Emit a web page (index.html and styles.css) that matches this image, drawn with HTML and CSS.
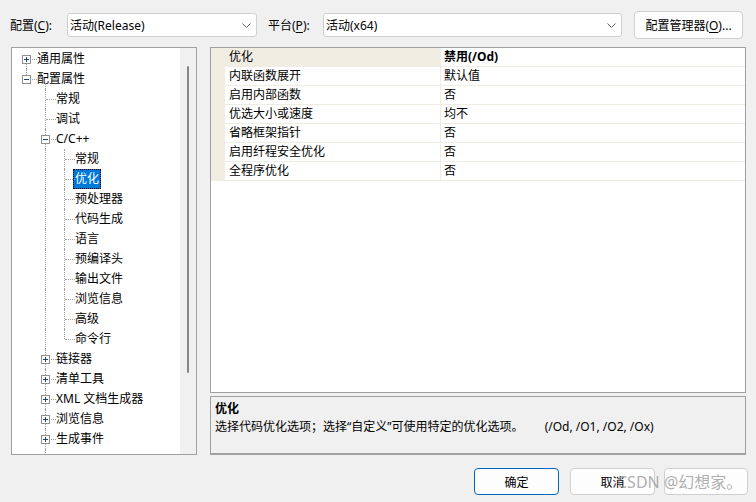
FILE: index.html
```html
<!DOCTYPE html>
<html lang="zh-CN">
<head>
    <meta charset="UTF-8">
    <title>属性页</title>
    <link rel="stylesheet" href="styles.css">
</head>
<body>
    <div class="top">
        <label class="lbl1">配置(<u>C</u>):</label>
        <div class="combo c1"><span>活动(Release)</span><svg width="9" height="5" viewBox="0 0 9 5"><polyline points="0.5,0.5 4.5,4.5 8.5,0.5" fill="none" stroke="#5f5f5f"/></svg></div>
        <label class="lbl2">平台(<u>P</u>):</label>
        <div class="combo c2"><span>活动(x64)</span><svg width="9" height="5" viewBox="0 0 9 5"><polyline points="0.5,0.5 4.5,4.5 8.5,0.5" fill="none" stroke="#5f5f5f"/></svg></div>
        <button class="btn mgr">配置管理器(<u>O</u>)...</button>
    </div>

    <div class="main">
        <div class="tree-box">
            <div class="tree">
                <div class="row"><i class="c v bot h"><b class="box plus"></b></i><span class="t">通用属性</span></div>
                <div class="row"><i class="c v top h"><b class="box"></b></i><i class="c v start"></i><span class="t lead">配置属性</span></div>
                <div class="row"><i class="c"></i><i class="c v h"></i><span class="t">常规</span></div>
                <div class="row"><i class="c"></i><i class="c v h"></i><span class="t">调试</span></div>
                <div class="row"><i class="c"></i><i class="c v h"><b class="box"></b></i><span class="t">C/C++</span></div>
                <div class="row"><i class="c"></i><i class="c v"></i><i class="c v h"></i><span class="t">常规</span></div>
                <div class="row"><i class="c"></i><i class="c v"></i><i class="c v h"></i><span class="t sel">优化</span></div>
                <div class="row"><i class="c"></i><i class="c v"></i><i class="c v h"></i><span class="t">预处理器</span></div>
                <div class="row"><i class="c"></i><i class="c v"></i><i class="c v h"></i><span class="t">代码生成</span></div>
                <div class="row"><i class="c"></i><i class="c v"></i><i class="c v h"></i><span class="t">语言</span></div>
                <div class="row"><i class="c"></i><i class="c v"></i><i class="c v h"></i><span class="t">预编译头</span></div>
                <div class="row"><i class="c"></i><i class="c v"></i><i class="c v h"></i><span class="t">输出文件</span></div>
                <div class="row"><i class="c"></i><i class="c v"></i><i class="c v h"></i><span class="t">浏览信息</span></div>
                <div class="row"><i class="c"></i><i class="c v"></i><i class="c v h"></i><span class="t">高级</span></div>
                <div class="row"><i class="c"></i><i class="c v"></i><i class="c v top h"></i><span class="t">命令行</span></div>
                <div class="row"><i class="c"></i><i class="c v h"><b class="box plus"></b></i><span class="t">链接器</span></div>
                <div class="row"><i class="c"></i><i class="c v h"><b class="box plus"></b></i><span class="t">清单工具</span></div>
                <div class="row"><i class="c"></i><i class="c v h"><b class="box plus"></b></i><span class="t">XML 文档生成器</span></div>
                <div class="row"><i class="c"></i><i class="c v h"><b class="box plus"></b></i><span class="t">浏览信息</span></div>
                <div class="row"><i class="c"></i><i class="c v h"><b class="box plus"></b></i><span class="t">生成事件</span></div>
                <div class="row"><i class="c"></i><i class="c v"></i></div>
            </div>
            <div class="vscroll"><div class="thumb"></div></div>
        </div>

        <div class="props">
            <div class="grid">
                <div class="prow cur"><span class="gut"></span><span class="name">优化</span><span class="val">禁用(/Od)</span></div>
                <div class="prow"><span class="gut"></span><span class="name">内联函数展开</span><span class="val">默认值</span></div>
                <div class="prow"><span class="gut"></span><span class="name">启用内部函数</span><span class="val">否</span></div>
                <div class="prow"><span class="gut"></span><span class="name">优选大小或速度</span><span class="val">均不</span></div>
                <div class="prow"><span class="gut"></span><span class="name">省略框架指针</span><span class="val">否</span></div>
                <div class="prow"><span class="gut"></span><span class="name">启用纤程安全优化</span><span class="val">否</span></div>
                <div class="prow"><span class="gut"></span><span class="name">全程序优化</span><span class="val">否</span></div>
            </div>
            <div class="desc">
                <div class="desc-title">优化</div>
                <div>选择代码优化选项；选择“自定义”可使用特定的优化选项。<span class="flags">(/Od, /O1, /O2, /Ox)</span></div>
            </div>
        </div>
    </div>

    <div class="foot">
        <button class="btn ok">确定</button>
        <button class="btn cancel">取消</button>
        <button class="btn apply"></button>
        <div class="watermark">CSDN @幻想家。</div>
    </div>
</body>
</html>
```

FILE: styles.css
```css
body { margin: 0; width: 756px; height: 502px; overflow: hidden; background: #f0f0f0; color: #000; font: 12px "Noto Sans", "Noto Sans CJK SC", sans-serif; }
u { text-decoration: underline; text-underline-offset: 2px; }

.top { display: flex; align-items: center; height: 47px; padding: 3px 0 0 10px; box-sizing: border-box; }
.lbl1 { width: 57px; }
.lbl2 { width: 55px; margin-left: 11px; }
.combo { display: flex; align-items: center; justify-content: space-between; height: 24px; box-sizing: border-box; padding: 0 5px 0 2px; background: #fff; border: 1px solid #d0d0d0; border-radius: 3px; }
.c1 { width: 190px; }
.c2 { width: 299px; }

.btn { height: 27px; box-sizing: border-box; padding: 0; font: inherit; color: #000; background: #fdfdfd; border: 1px solid #d0d0d0; border-radius: 4px; }
.mgr { width: 109px; height: 28px; margin-left: 12px; }

.main { display: flex; gap: 13px; height: 408px; padding-left: 11px; }

.tree-box { display: flex; width: 186px; height: 408px; box-sizing: border-box; background: #fff; border: 1px solid #a0a0a0; }
.tree { flex: 1; overflow: hidden; padding: 1px 0 0 5px; }
.row { display: flex; align-items: center; height: 20px; }
.c { position: relative; flex: none; width: 19px; height: 20px; }
.c.v::before { content: ""; position: absolute; left: 9px; top: 0; bottom: 0; border-left: 1px dotted #a0a0a0; }
.c.v.top::before { bottom: 10px; }
.c.v.bot::before { top: 10px; }
.c.v.start::before { top: 14px; }
.c.h::after { content: ""; position: absolute; left: 10px; right: -1px; top: 10px; border-top: 1px dotted #a0a0a0; }
.box { position: absolute; z-index: 1; left: 5px; top: 6px; width: 9px; height: 9px; box-sizing: border-box; border: 1px solid #919191; background: linear-gradient(#25427a, #25427a) center / 5px 1px no-repeat, #fff; }
.box.plus { background: linear-gradient(#25427a, #25427a) center / 5px 1px no-repeat, linear-gradient(#25427a, #25427a) center / 1px 5px no-repeat, #fff; }
.t { margin-left: -1px; padding: 0 2px; line-height: 20px; white-space: nowrap; }
.t.lead { margin-left: -20px; background: #fff; }
.t.sel { background: #0078d7; color: #fff; outline: 1px dotted #000; outline-offset: -1px; }

.vscroll { flex: none; width: 16px; background: #f0f0f0; }
.thumb { width: 2px; height: 307px; margin: 18px 0 0 7px; background: #868686; border-radius: 1px; }

.props { display: flex; flex-direction: column; width: 536px; }
.grid { height: 346px; box-sizing: border-box; background: #fff; border: 1px solid #a0a0a0; }
.prow { display: grid; grid-template-columns: 14px 215px 1fr; height: 19px; line-height: 18px; }
.gut { background: #f0ede2; }
.name { padding-left: 4px; border-bottom: 1px solid #efece3; white-space: nowrap; }
.val { padding-left: 3px; border-left: 1px solid #efece3; border-bottom: 1px solid #efece3; white-space: nowrap; }
.prow.cur .name { background: #f0ede2; }
.prow.cur .val { font-weight: bold; }

.desc { height: 59px; margin-top: 3px; box-sizing: border-box; padding: 3px 4px; line-height: 18px; border: 1px solid #a0a0a0; border-bottom-width: 2px; }
.desc-title { font-weight: bold; }
.flags { margin-left: 21px; }

.foot { position: relative; display: flex; padding: 13px 0 0 474px; }
.ok { width: 85px; border-color: #0067c0; }
.cancel { width: 85px; margin-left: 11px; }
.apply { width: 84px; margin-left: 9px; }
.watermark { position: absolute; left: 617px; top: 17px; font-size: 16px; line-height: 20px; color: rgba(140, 140, 140, 0.7); white-space: nowrap; }
```
